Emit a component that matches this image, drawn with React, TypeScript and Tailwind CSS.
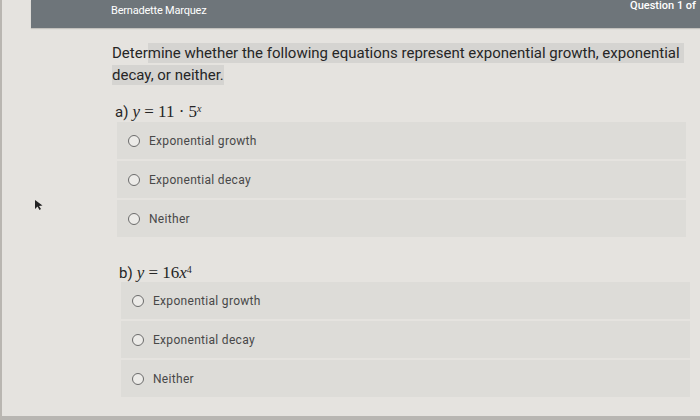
import React from "react";

function Radio() {
  return <span className="inline-block w-[12px] h-[12px] rounded-full border-[1.5px] border-[#6b6b6b] bg-[#ecebe8] shrink-0" />;
}

function Option({ label }: { label: string }) {
  return (
    <div className="h-[37px] bg-[#dddcd8] flex items-center gap-[9px] pl-[11px]">
      <Radio />
      <span className="text-[12px] tracking-[0.3px] text-[#484848]" style={{ fontFamily: "Roboto, sans-serif" }}>{label}</span>
    </div>
  );
}

export default function App() {
  const serif = { fontFamily: "'Liberation Serif', 'DejaVu Serif', serif" };
  return (
    <div className="relative w-[700px] h-[420px] overflow-hidden bg-[#e5e3df] border-l-[2px] border-[#b9b6b1]" style={{ fontFamily: "Roboto, sans-serif" }}>
      <div className="ml-[29px] h-[28px] bg-[#6e757a] flex items-start justify-between pl-[80px] shadow-[0_1px_1px_rgba(0,0,0,0.15)]">
        <span className="text-[11px] text-white mt-[3px] tracking-[-0.2px]">Bernadette Marquez</span>
        <span className="text-[11px] text-white mt-[-2px] font-medium whitespace-nowrap mr-[4px]">Question 1 of</span>
      </div>
      <div className="pl-[110px] pr-[14px]">
        <p className="mt-[14px] text-[15px] leading-[22px] text-[#262626]">
          Deter<span className="bg-[#d5d4d1] pr-[4px] py-[1px]">mine whether the following equations represent exponential growth, exponential</span>
          <br />
          <span className="bg-[#d5d4d1] py-[1px]">decay, or neither.</span>
        </p>
        <div className="mt-[13px] ml-[3px] text-[15px] text-[#262626] flex items-baseline gap-[4px] h-[20px]">
          <span>a)</span>
          <span className="text-[17px]" style={serif}>
            <i>y</i> = 11 · 5<sup className="text-[10px]"><i>x</i></sup>
          </span>
        </div>
        <div className="mt-[3px] ml-[5px] flex flex-col gap-[2px]">
          <Option label="Exponential growth" />
          <Option label="Exponential decay" />
          <Option label="Neither" />
        </div>
        <div className="mt-[23px] ml-[7px] text-[15px] text-[#262626] flex items-baseline gap-[4px] h-[20px]">
          <span>b)</span>
          <span className="text-[17px]" style={serif}>
            <i>y</i> = 16<i>x</i><sup className="text-[10px]">4</sup>
          </span>
        </div>
        <div className="mt-[2px] ml-[9px] mr-[-4px] flex flex-col gap-[2px]">
          <Option label="Exponential growth" />
          <Option label="Exponential decay" />
          <Option label="Neither" />
        </div>
      </div>
      <div className="absolute left-0 right-0 bottom-0 h-[4px] bg-[#b8b6b2]" />
      <svg className="absolute left-[32px] top-[199px]" width="10" height="12" viewBox="0 0 10 12">
        <path d="M1 1 L1 10 L3.5 7.5 L5.5 11 L7 10 L5 7 L8.5 6.5 Z" fill="#222" />
      </svg>
    </div>
  );
}
